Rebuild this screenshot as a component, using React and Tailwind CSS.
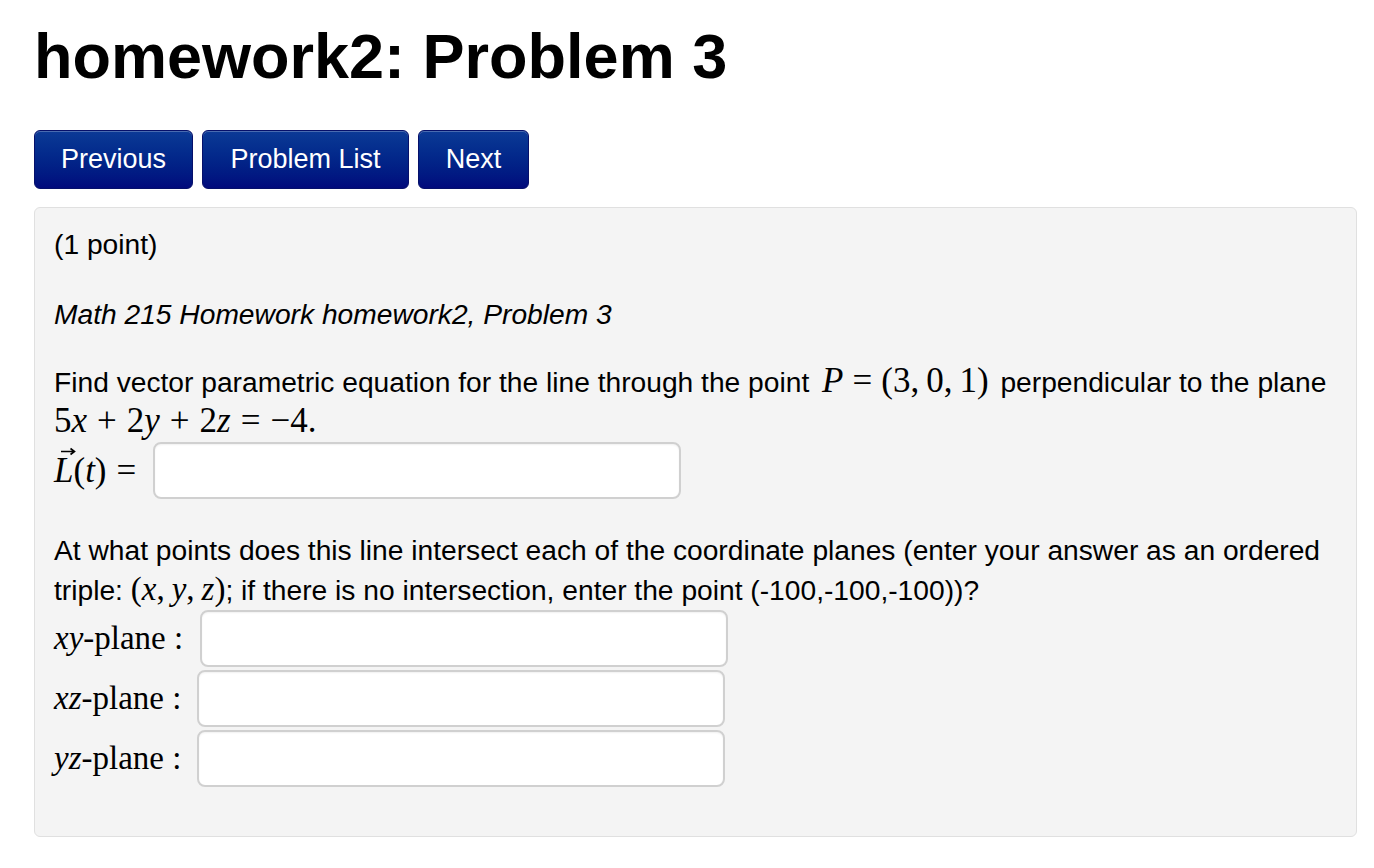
import React from "react";

const serif = "font-['Liberation_Serif','Times_New_Roman',serif]";

function M({ children, className = "", size = "text-[35px]" }) {
  return <span className={`${serif} ${size} leading-none ${className}`}>{children}</span>;
}

function Btn({ children, w }) {
  return (
    <div className={`${w} h-[59px] flex items-center justify-center rounded-[6px] border border-[#06106a] bg-gradient-to-b from-[#0c3a96] to-[#020a7c] text-white text-[27px] shadow-[inset_0_1px_0_rgba(255,255,255,0.25)]`}>
      {children}
    </div>
  );
}

function Field() {
  return (
    <div className="w-[528px] h-[57px] shrink-0 bg-white border-2 border-[#d0d0d0] rounded-[8px] shadow-[inset_0_1px_2px_rgba(0,0,0,0.06)]" />
  );
}

export default function App() {
  return (
    <div className="min-h-[868px] bg-white text-black font-['Liberation_Sans',Arial,Helvetica,sans-serif] px-[34px] pt-[22px]">
      <h1 className="text-[63px] font-bold leading-[69px]">homework2: Problem 3</h1>

      <div className="flex gap-[9px] mt-[39px]">
        <Btn w="w-[159px]">Previous</Btn>
        <Btn w="w-[207px]">Problem List</Btn>
        <Btn w="w-[111px]">Next</Btn>
      </div>

      <div className="mt-[18px] w-[1323px] h-[630px] bg-[#f4f4f4] border border-[#e0e0e0] rounded-[6px] pl-[19px] pt-[16px] text-[28.2px] leading-[40px]">
        <div className="h-[40px]">(1 point)</div>

        <div className="mt-[30px] h-[40px] italic">Math 215 Homework homework2, Problem 3</div>

        <div className="mt-[28px] h-[40px] whitespace-nowrap">
          Find vector parametric equation for the line through the point{" "}
          <M className="ml-[5px] mr-[4px]">
            <i>P</i>
            <span className="mx-[9px]">=</span>(3,<span className="ml-[7px]">0</span>,<span className="ml-[7px]">1</span>)
          </M>{" "}
          perpendicular to the plane
        </div>
        <div className="h-[40px] whitespace-nowrap">
          <M>
            5<i>x</i>
            <span className="mx-[10px]">+</span>2<i>y</i>
            <span className="mx-[10px]">+</span>2<i>z</i>
            <span className="mx-[10px]">=</span>−4.
          </M>
        </div>

        <div className="flex items-center gap-[17px] h-[57px]">
          <M>
            <span className="relative inline-block">
              <i>L</i>
              <svg className="absolute left-[6px] top-[-6px]" width="16" height="9" viewBox="0 0 16 9">
                <path d="M1 4.5 H14 M10.5 1.5 L14.5 4.5 L10.5 7.5" fill="none" stroke="black" strokeWidth="1.6" />
              </svg>
            </span>
            (<i>t</i>)<span className="ml-[10px]">=</span>
          </M>
          <Field />
        </div>

        <div className="mt-[31px] h-[40px] whitespace-nowrap">
          At what points does this line intersect each of the coordinate planes (enter your answer as an ordered
        </div>
        <div className="h-[40px] whitespace-nowrap">
          triple:{" "}
          <M size="text-[33px]">
            (<i>x</i>,<span className="ml-[7px]"><i>y</i></span>,<span className="ml-[7px]"><i>z</i></span>)
          </M>
          ; if there is no intersection, enter the point (-100,-100,-100))?
        </div>

        <div className="flex flex-col gap-[3px]">
          <div className="flex items-center gap-[17px] h-[57px]">
            <M size="text-[33px]"><i>xy</i>-plane :</M>
            <Field />
          </div>
          <div className="flex items-center gap-[16px] h-[57px]">
            <M size="text-[33px]"><i>xz</i>-plane :</M>
            <Field />
          </div>
          <div className="flex items-center gap-[16px] h-[57px]">
            <M size="text-[33px]"><i>yz</i>-plane :</M>
            <Field />
          </div>
        </div>
      </div>
    </div>
  );
}
